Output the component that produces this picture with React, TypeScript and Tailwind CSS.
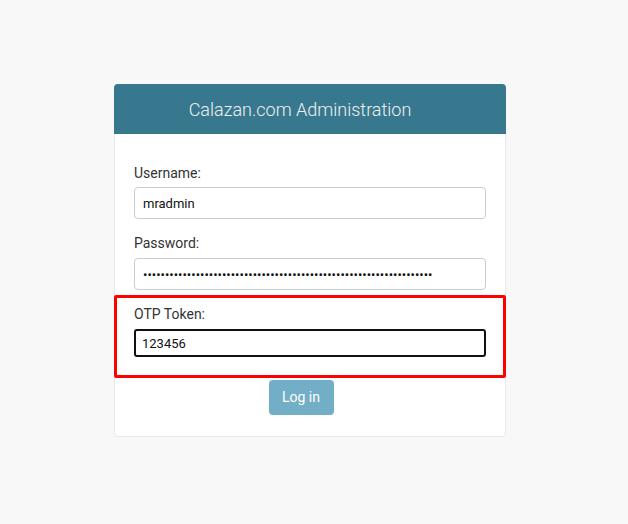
import React from "react";

export default function App() {
  const pw = "x".repeat(66);
  return (
    <div className="min-h-[524px] w-full bg-[#f8f8f8] pt-[84px] font-['Roboto',sans-serif]">
      <div className="ml-[114px] w-[392px] rounded-[4px] border border-[#eaeaea] bg-white">
        <div className="flex h-[50px] items-center justify-center rounded-t-[4px] bg-[#37788f] pr-[20px] -mx-px -mt-px">
          <h1 className="text-[18px] font-light text-[#f0f0f0]">Calazan.com Administration</h1>
        </div>
        <div className="relative px-[19px] pt-[30px] pb-[21px]">
          <div className="flex flex-col">
            <label className="text-[14px] leading-[18px] text-[#333]">Username:</label>
            <input
              readOnly
              value="mradmin"
              className="mt-[5px] h-[32px] w-[352px] rounded-[4px] border border-[#ccc] px-[8px] text-[13px] text-[#111] outline-none"
            />
            <label className="mt-[15px] text-[14px] leading-[18px] text-[#333]">Password:</label>
            <input
              readOnly
              type="password"
              value={pw}
              className="mt-[6px] h-[32px] w-[352px] rounded-[4px] border border-[#ccc] px-[8px] text-[13px] text-[#111] outline-none"
            />
            <label className="mt-[15px] text-[14px] leading-[18px] text-[#333]">OTP Token:</label>
            <input
              readOnly
              value="123456"
              className="mt-[6px] h-[28px] w-[352px] rounded-[3px] border-2 border-[#111] px-[6px] text-[13px] text-[#111] outline-none"
            />
            <div className="mt-[23px] flex justify-center pr-[18px]">
              <button className="h-[35px] w-[65px] rounded-[4px] bg-[#72aec6] text-[14px] text-white">Log in</button>
            </div>
          </div>
          <div className="pointer-events-none absolute left-[-1px] top-[161px] h-[83px] w-[392px] border-[3px] border-[#ff0000] rounded-[2px]" />
        </div>
      </div>
    </div>
  );
}
